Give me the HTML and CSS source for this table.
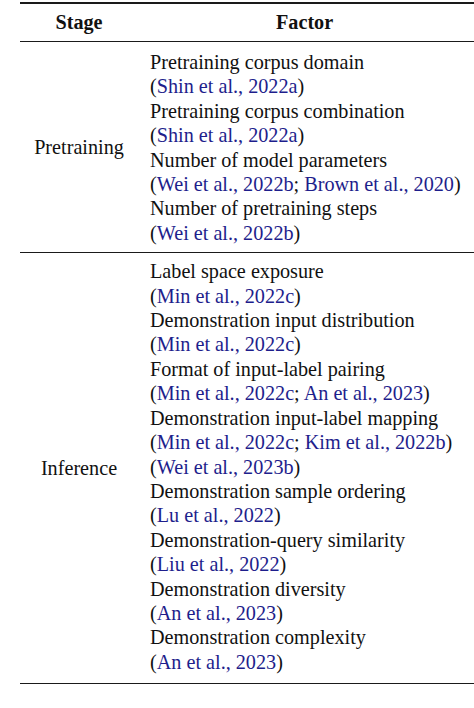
FILE: index.html
```html
<!DOCTYPE html>
<html>
<head>
<meta charset="utf-8">
<link rel="stylesheet" href="styles.css">
</head>
<body>
<div class="page">
<table class="factors">
  <thead>
    <tr><th class="stage">Stage</th><th class="factor">Factor</th></tr>
  </thead>
  <tbody class="group g1">
    <tr>
      <td class="stage">Pretraining</td>
      <td class="factor">
        <div class="line">Pretraining corpus domain</div>
        <div class="line">(<span class="cite">Shin et al., 2022a</span>)</div>
        <div class="line">Pretraining corpus combination</div>
        <div class="line">(<span class="cite">Shin et al., 2022a</span>)</div>
        <div class="line">Number of model parameters</div>
        <div class="line">(<span class="cite">Wei et al., 2022b</span>; <span class="cite">Brown et al., 2020</span>)</div>
        <div class="line">Number of pretraining steps</div>
        <div class="line">(<span class="cite">Wei et al., 2022b</span>)</div>
      </td>
    </tr>
  </tbody>
  <tbody class="group g2">
    <tr>
      <td class="stage">Inference</td>
      <td class="factor">
        <div class="line">Label space exposure</div>
        <div class="line">(<span class="cite">Min et al., 2022c</span>)</div>
        <div class="line">Demonstration input distribution</div>
        <div class="line">(<span class="cite">Min et al., 2022c</span>)</div>
        <div class="line">Format of input-label pairing</div>
        <div class="line">(<span class="cite">Min et al., 2022c</span>; <span class="cite">An et al., 2023</span>)</div>
        <div class="line">Demonstration input-label mapping</div>
        <div class="line">(<span class="cite">Min et al., 2022c</span>; <span class="cite">Kim et al., 2022b</span>)</div>
        <div class="line">(<span class="cite">Wei et al., 2023b</span>)</div>
        <div class="line">Demonstration sample ordering</div>
        <div class="line">(<span class="cite">Lu et al., 2022</span>)</div>
        <div class="line">Demonstration-query similarity</div>
        <div class="line">(<span class="cite">Liu et al., 2022</span>)</div>
        <div class="line">Demonstration diversity</div>
        <div class="line">(<span class="cite">An et al., 2023</span>)</div>
        <div class="line">Demonstration complexity</div>
        <div class="line">(<span class="cite">An et al., 2023</span>)</div>
      </td>
    </tr>
  </tbody>
</table>
</div>
</body>
</html>
```
FILE: styles.css
```css
html, body {
  margin: 0;
  padding: 0;
  background: #ffffff;
  overflow: hidden;
}

.page {
  width: 474px;
  height: 708px;
  overflow: hidden;
  padding-top: 2px;
  padding-left: 20px;
  box-sizing: border-box;
}

.factors {
  border-collapse: collapse;
  width: 480px;
  font-family: "Liberation Serif", "Times New Roman", serif;
  font-size: 20.2px;
  color: #111111;
}

.factors thead th {
  font-weight: bold;
  height: 37px;
  padding: 0;
  vertical-align: middle;
  text-align: center;
  border-top: 2px solid #1a1a1a;
  border-bottom: 1.5px solid #1a1a1a;
}

.factors .stage {
  width: 118px;
  text-align: center;
  vertical-align: middle;
  padding: 0;
}

.factors thead th.factor {
  text-align: left;
  padding-left: 138px;
}

.factors td.factor {
  text-align: left;
  padding: 0 0 0 12px;
}

.group td {
  border-bottom: 1.5px solid #1a1a1a;
}

.g1 td.factor {
  padding-top: 8px;
  padding-bottom: 7px;
}

.g2 td.factor {
  padding-top: 6px;
  padding-bottom: 9px;
}

.line {
  line-height: 24.4px;
  white-space: nowrap;
}

.cite {
  color: #1e1e8c;
}
```
